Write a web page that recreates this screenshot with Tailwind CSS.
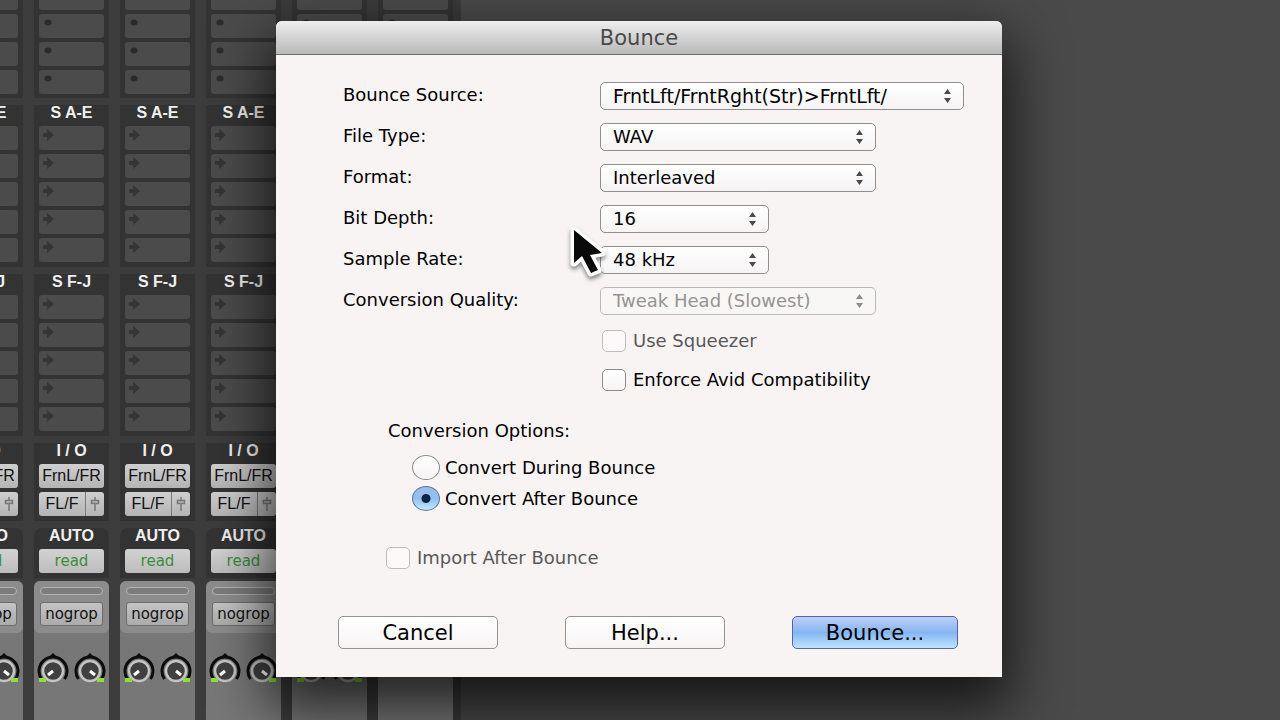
<!DOCTYPE html>
<html lang="en">
<head>
    <meta charset="UTF-8">
    <meta name="viewport" content="width=device-width, initial-scale=1.0">
    <title>Bounce</title>
    <script src="https://cdn.jsdelivr.net/npm/@tailwindcss/browser@4"></script>
</head>
<body class="relative h-screen overflow-hidden bg-[#4a4a4a] font-['DejaVu_Sans',sans-serif] text-lg text-black">

    <!-- Mixer strips -->
    <div class="flex h-full w-fit">
        <div id="mixer" class="-ml-[52px] flex h-full gap-[11px] border-r-8 border-[#3a3a3a] bg-[#3c3c3c]"></div>
    </div>

    <template id="strip">
        <div class="flex h-full w-[75px] flex-none flex-col gap-[7px] font-['Liberation_Sans',sans-serif] text-base leading-none">
            <div data-slots="4" data-icon="dot" class="-mt-[14px] flex flex-col gap-1 bg-[#333333] px-[5px] pb-1"></div>
            <div class="bg-[#333333] px-[5px] pb-[5px]">
                <h2 class="h-[21px] text-center font-bold text-[#f0f0f0]">S A-E</h2>
                <div data-slots="5" data-icon="arrow" class="flex flex-col gap-1"></div>
            </div>
            <div class="bg-[#333333] px-[5px] pb-[5px]">
                <h2 class="h-[21px] text-center font-bold text-[#f0f0f0]">S F-J</h2>
                <div data-slots="5" data-icon="arrow" class="flex flex-col gap-1"></div>
            </div>
            <div class="flex flex-col gap-1 bg-[#333333] px-[5px] pb-[5px]">
                <h2 class="-mb-1 h-[21px] text-center font-bold text-[#f0f0f0]">I / O</h2>
                <button class="h-6 rounded-[3px] bg-linear-to-b from-[#cfcfcf] to-[#b4b4b4] text-[#111111]">FrnL/FR</button>
                <div class="flex h-6 overflow-hidden rounded-[3px] bg-linear-to-b from-[#cfcfcf] to-[#b4b4b4] text-[#111111]">
                    <button class="flex-1">FL/F</button>
                    <button aria-label="Output fader" class="flex w-[19px] items-center justify-center border-l border-[#7a7a7a]">
                        <svg width="10" height="16" viewBox="0 0 10 16" fill="none" stroke="#777777" stroke-width="1.5"><path d="M5 1v14"/><path d="M1.5 4.5h7v3h-7z" fill="#bbbbbb"/></svg>
                    </button>
                </div>
            </div>
            <div class="flex flex-col rounded-t-lg bg-[#333333] px-[5px] pb-[5px]">
                <h2 class="h-[21px] text-center font-bold text-[#f0f0f0]">AUTO</h2>
                <button class="h-6 rounded-[3px] bg-linear-to-b from-[#d2d2d2] to-[#bcbcbc] font-['DejaVu_Sans',sans-serif] text-[15px] text-[#3c8c3c]">read</button>
            </div>
            <div class="-mt-1 flex-1 rounded-t-md bg-[#777777]">
                <div class="flex flex-col gap-[7px] rounded-md bg-[#8c8c8c] px-[6px] pt-[6px] pb-[7px]">
                    <div class="h-2 rounded-full border border-[#b4b4b4] bg-[#7c7c7c]"></div>
                    <button class="h-6 rounded-[3px] border border-[#6c6c6c] bg-linear-to-b from-[#c4c4c4] to-[#ababab] font-['DejaVu_Sans',sans-serif] text-[15px] leading-none text-[#111111]">nogrop</button>
                </div>
                <div data-knobs class="flex justify-between px-[3px] pt-5">
                    <svg width="32" height="30" viewBox="0 0 32 30">
                        <path d="M4.500 26A14 14 0 1 1 27.500 26" fill="none" stroke="#0c0c0c" stroke-width="3"/>
                        <path d="M12 4l4-4 4 4z" fill="#0c0c0c"/>
                        <circle cx="16" cy="18" r="10" fill="#404040" stroke="#c4c4c4" stroke-width="2.500"/>
                        <path d="M16 18l-5 4" stroke="#ffffff" stroke-width="3"/>
                        <path d="M2 25h7v4H2z" fill="#8ee032"/>
                    </svg>
                    <svg width="32" height="30" viewBox="0 0 32 30">
                        <path d="M4.500 26A14 14 0 1 1 27.500 26" fill="none" stroke="#0c0c0c" stroke-width="3"/>
                        <path d="M12 4l4-4 4 4z" fill="#0c0c0c"/>
                        <circle cx="16" cy="18" r="10" fill="#404040" stroke="#c4c4c4" stroke-width="2.500"/>
                        <path d="M16 18l5 4" stroke="#ffffff" stroke-width="3"/>
                        <path d="M23 25h7v4h-7z" fill="#8ee032"/>
                    </svg>
                </div>
            </div>
        </div>
    </template>

    <template id="slot-dot">
        <div class="h-6 flex-none rounded-[3px] bg-[#4b4b4b] pt-[5px] pl-[5px]">
            <svg width="8" height="7" viewBox="0 0 8 7"><ellipse cx="4" cy="3.500" rx="3.500" ry="3" fill="#2b2b2b"/></svg>
        </div>
    </template>
    <template id="slot-arrow">
        <div class="h-6 flex-none rounded-[3px] bg-[#4b4b4b] pt-[3px] pl-1">
            <svg width="11" height="12" viewBox="0 0 11 12"><path d="M0 4h4V0l7 6-7 6V8H0z" fill="#353535"/></svg>
        </div>
    </template>

    <!-- Bounce dialog -->
    <form class="absolute top-[21px] left-[276px] w-[726px] rounded-t-md bg-[#f8f4f4] shadow-[0_24px_56px_8px_rgba(0,0,0,0.7)]">
        <h1 class="flex h-[34px] items-center justify-center rounded-t-md border-b border-[#6e6e6e] bg-linear-to-b from-[#eeeeee] to-[#b9b9b9] pt-px text-[21px] text-[#4a4a4a]">Bounce</h1>

        <div class="pt-5 pl-[67px]">
            <div class="grid auto-rows-[41px] grid-cols-[257px_1fr] items-center leading-6">
                <label for="source" class="pb-px">Bounce Source:</label>
                <div class="relative w-[364px]">
                    <select id="source" class="h-7 w-full appearance-none rounded-[5px] border border-[#8f8f8f] bg-linear-to-b from-white to-[#f6f4f4] pl-3 text-[19px]"><option>FrntLft/FrntRght(Str)&gt;FrntLft/</option></select>
                    <svg class="pointer-events-none absolute top-[7px] right-3" width="9" height="14" viewBox="0 0 9 14" fill="#4a4a4a"><path d="M4.500 0L8 5H1zM4.500 14L8 9H1z"/></svg>
                </div>
                <label for="type" class="pb-px">File Type:</label>
                <div class="relative w-[276px]">
                    <select id="type" class="h-7 w-full appearance-none rounded-[5px] border border-[#8f8f8f] bg-linear-to-b from-white to-[#f6f4f4] pl-3"><option>WAV</option></select>
                    <svg class="pointer-events-none absolute top-[7px] right-3" width="9" height="14" viewBox="0 0 9 14" fill="#4a4a4a"><path d="M4.500 0L8 5H1zM4.500 14L8 9H1z"/></svg>
                </div>
                <label for="format" class="pb-px">Format:</label>
                <div class="relative w-[276px]">
                    <select id="format" class="h-7 w-full appearance-none rounded-[5px] border border-[#8f8f8f] bg-linear-to-b from-white to-[#f6f4f4] pl-3"><option>Interleaved</option></select>
                    <svg class="pointer-events-none absolute top-[7px] right-3" width="9" height="14" viewBox="0 0 9 14" fill="#4a4a4a"><path d="M4.500 0L8 5H1zM4.500 14L8 9H1z"/></svg>
                </div>
                <label for="depth" class="pb-px">Bit Depth:</label>
                <div class="relative w-[169px]">
                    <select id="depth" class="h-7 w-full appearance-none rounded-[5px] border border-[#8f8f8f] bg-linear-to-b from-white to-[#f6f4f4] pl-3"><option>16</option></select>
                    <svg class="pointer-events-none absolute top-[7px] right-3" width="9" height="14" viewBox="0 0 9 14" fill="#4a4a4a"><path d="M4.500 0L8 5H1zM4.500 14L8 9H1z"/></svg>
                </div>
                <label for="rate" class="pb-px">Sample Rate:</label>
                <div class="relative w-[169px]">
                    <select id="rate" class="h-7 w-full appearance-none rounded-[5px] border border-[#8f8f8f] bg-linear-to-b from-white to-[#f6f4f4] pl-3"><option>48 kHz</option></select>
                    <svg class="pointer-events-none absolute top-[7px] right-3" width="9" height="14" viewBox="0 0 9 14" fill="#4a4a4a"><path d="M4.500 0L8 5H1zM4.500 14L8 9H1z"/></svg>
                </div>
                <label for="quality" class="pb-px">Conversion Quality:</label>
                <div class="relative w-[276px]">
                    <select id="quality" disabled class="h-7 w-full appearance-none rounded-[5px] border border-[#b9b9b9] bg-[#f9f6f6] pl-3 text-[#969393] opacity-100"><option>Tweak Head (Slowest)</option></select>
                    <svg class="pointer-events-none absolute top-[7px] right-3" width="9" height="14" viewBox="0 0 9 14" fill="#8e8b8b"><path d="M4.500 0L8 5H1zM4.500 14L8 9H1z"/></svg>
                </div>
            </div>
            <div class="pl-[259px] leading-6">
                <label class="flex h-[39px] items-center gap-[7px] text-[#5a5858]"><input type="checkbox" disabled class="h-[22px] w-6 appearance-none rounded-[5px] border border-[#c0bcbc] bg-[#fbf9f9]">Use Squeezer</label>
                <label class="flex h-[39px] items-center gap-[7px]"><input type="checkbox" class="h-[22px] w-6 appearance-none rounded-[5px] border border-[#8a8a8a] bg-linear-to-b from-white to-[#f6f4f4]">Enforce Avid Compatibility</label>
            </div>
        </div>

        <fieldset class="pt-5 pl-[112px] leading-6">
            <legend class="float-left w-full">Conversion Options:</legend>
            <div class="clear-both pt-[9px] pl-6">
                <label class="flex h-[31px] items-center gap-[5px]"><input type="radio" name="when" class="h-[25px] w-7 appearance-none rounded-[50%] border border-[#8a8a8a] bg-linear-to-b from-white to-[#f6f4f4]">Convert During Bounce</label>
                <label class="flex h-[31px] items-center gap-[5px]"><input type="radio" name="when" checked class="h-[25px] w-7 appearance-none rounded-[50%] border border-[#5c6f96] bg-linear-to-b from-[#a9c6f0] to-[#c4e4ff] checked:bg-[radial-gradient(circle_at_center,#0f2440_4px,transparent_5px),linear-gradient(#9fbcea,#8fc0f4_50%,#c4e8ff)]">Convert After Bounce</label>
            </div>
        </fieldset>

        <label class="mt-8 ml-[110px] flex h-6 w-fit items-center gap-[7px] leading-6 text-[#5a5858]"><input type="checkbox" disabled class="h-[22px] w-6 appearance-none rounded-[5px] border border-[#c0bcbc] bg-[#fbf9f9]">Import After Bounce</label>

        <div class="mt-[46px] flex justify-between pr-11 pb-7 pl-[62px] text-[21px] leading-6">
            <button type="button" class="h-[33px] w-40 rounded-[5px] border border-[#939393] bg-linear-to-b from-white to-[#f7f4f4]">Cancel</button>
            <button type="button" class="h-[33px] w-40 rounded-[5px] border border-[#939393] bg-linear-to-b from-white to-[#f7f4f4]">Help...</button>
            <button type="button" class="h-[33px] w-[166px] rounded-[5px] border border-[#56659c] bg-linear-to-b from-[#bcd0f6] via-[#85b6f2] to-[#bfe4ff]">Bounce...</button>
        </div>
    </form>

    <!-- Mouse pointer -->
    <svg class="absolute top-[222px] left-[568px] drop-shadow-[0_3px_2px_rgba(0,0,0,0.45)]" width="42" height="60" viewBox="0 0 42 60">
        <path d="M6 8v33l8-7 9 17 7-3-8-15 12-2z" fill="#0a0a0a" stroke="#ffffff" stroke-width="7" stroke-linejoin="round" paint-order="stroke"/>
    </svg>

    <script>
        const mixer = document.getElementById('mixer');
        const strip = document.getElementById('strip');
        const stripCount = 6;
        const labelledStrips = 4;

        for (let i = 0; i < stripCount; i++) {
            const node = strip.content.cloneNode(true);
            node.querySelectorAll('[data-slots]').forEach(group => {
                const slot = document.getElementById('slot-' + group.dataset.icon);
                for (let n = 0; n < Number(group.dataset.slots); n++) {
                    group.appendChild(slot.content.cloneNode(true));
                }
            });
            // strips under the dialog stay blank
            if (i >= labelledStrips) {
                node.querySelectorAll('h2, button:not([aria-label])').forEach(el => el.textContent = '');
            }
            // the last strip has no pan knobs
            if (i === stripCount - 1) node.querySelector('[data-knobs]').remove();
            mixer.appendChild(node);
        }
    </script>
</body>
</html>
